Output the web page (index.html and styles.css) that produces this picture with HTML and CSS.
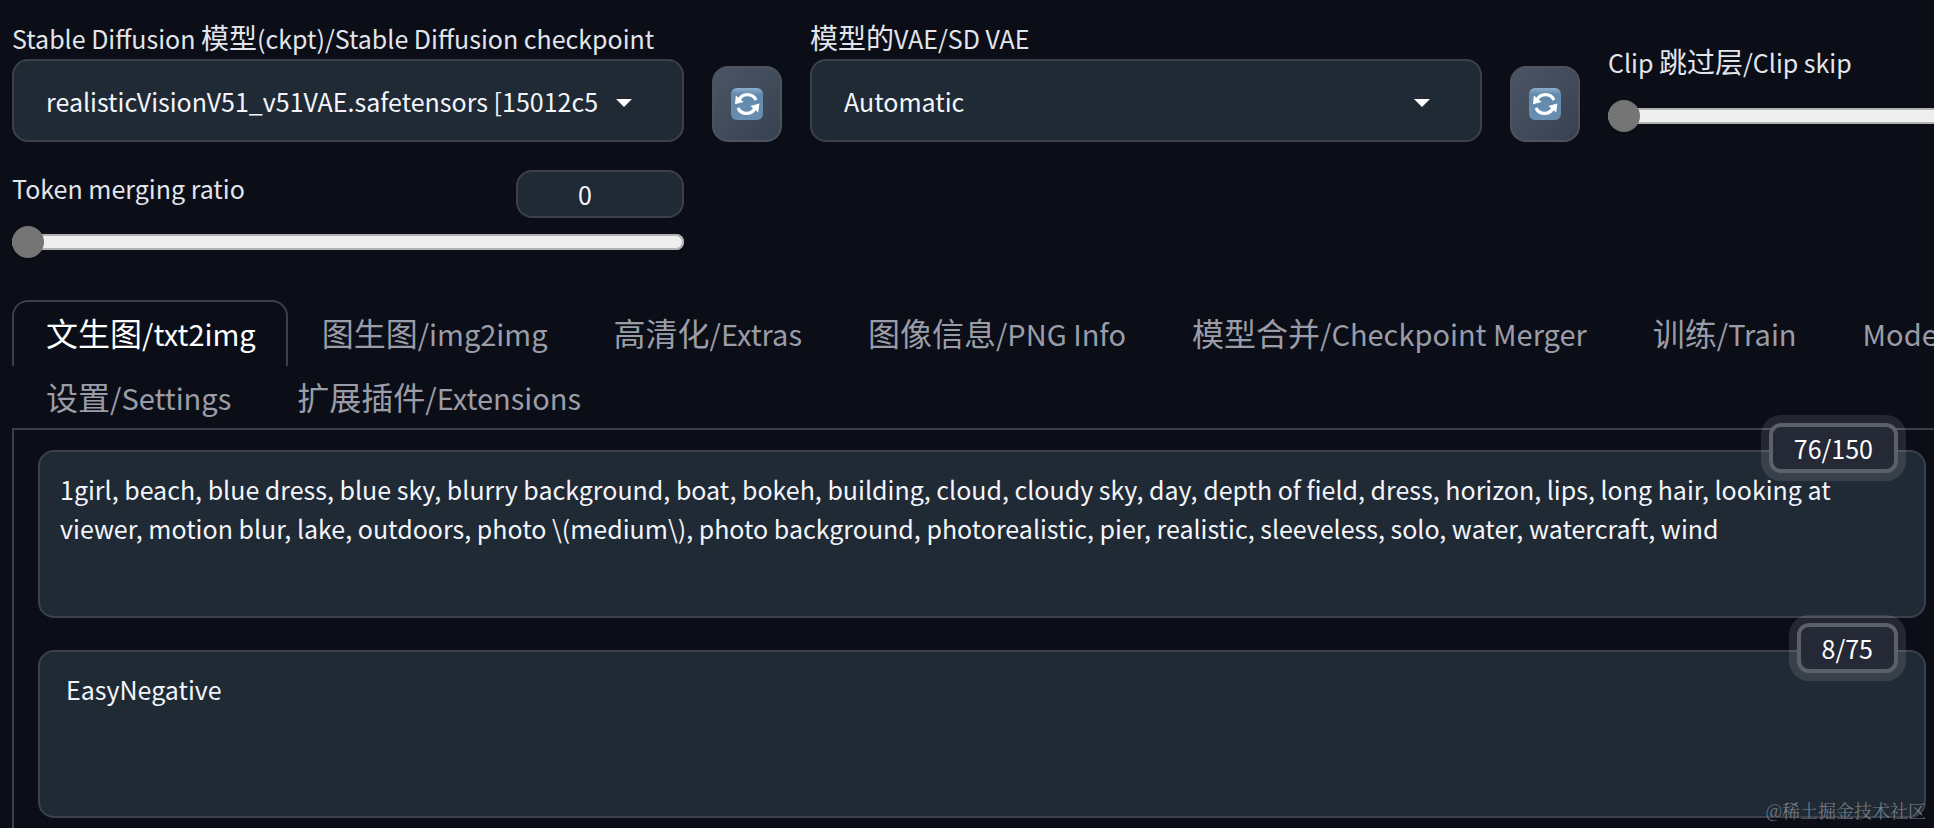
FILE: index.html
```html
<!DOCTYPE html>
<html lang="zh-CN">
  <head>
    <meta charset="UTF-8" />
    <meta name="viewport" content="width=device-width, initial-scale=1.0" />
    <title>Stable Diffusion</title>
    <link rel="stylesheet" href="styles.css">
  </head>
  <body>
    <svg class="sprite" aria-hidden="true">
      <defs>
        <linearGradient id="refreshFill" x1="0" y1="0" x2="0" y2="1">
          <stop offset="0" stop-color="#8fb0cc" />
          <stop offset="0.2" stop-color="#6389ad" />
          <stop offset="1" stop-color="#688fb0" />
        </linearGradient>
      </defs>
      <symbol id="refresh" viewBox="0 0 32 32">
        <rect width="32" height="32" rx="6" fill="url(#refreshFill)" />
        <path d="M8 12A9.4 9.4 0 0 1 25 12" fill="none" stroke="#fff" stroke-width="3.2" />
        <path d="M24 20A9.4 9.4 0 0 1 7 20" fill="none" stroke="#fff" stroke-width="3.2" />
        <path d="M4.8 7.5L4 16.2L12.6 14Z" fill="#fff" />
        <path d="M27.2 24.5L28.4 15.4L19.4 18Z" fill="#fff" />
      </symbol>
    </svg>

    <section class="quicksettings">
      <div class="field">
        <label for="checkpoint">Stable Diffusion <span class="zh">模型</span>(ckpt)/Stable Diffusion checkpoint</label>
        <div class="dropdown">
          <select id="checkpoint">
            <option>realisticVisionV51_v51VAE.safetensors [15012c5</option>
          </select>
        </div>
      </div>
      <button class="refresh" type="button" aria-label="Refresh checkpoints">
        <svg><use href="#refresh" /></svg>
      </button>

      <div class="field">
        <label for="vae"><span class="zh">模型的</span>VAE/SD VAE</label>
        <div class="dropdown">
          <select id="vae">
            <option>Automatic</option>
          </select>
        </div>
      </div>
      <button class="refresh" type="button" aria-label="Refresh VAE">
        <svg><use href="#refresh" /></svg>
      </button>

      <div class="field clip-skip">
        <div class="slider-head">
          <label for="clip">Clip <span class="zh">跳过层</span>/Clip skip</label>
        </div>
        <input type="range" id="clip" min="1" max="12" value="1" />
      </div>

      <div class="field">
        <div class="slider-head">
          <label for="ratio">Token merging ratio</label>
          <input type="number" id="ratioNumber" value="0" aria-label="Token merging ratio value" />
        </div>
        <input type="range" id="ratio" min="0" max="1" step="0.1" value="0" />
      </div>
    </section>

    <nav class="tabs">
      <button type="button" class="selected"><span class="zh">文生图</span>/txt2img</button>
      <button type="button"><span class="zh">图生图</span>/img2img</button>
      <button type="button"><span class="zh">高清化</span>/Extras</button>
      <button type="button"><span class="zh">图像信息</span>/PNG Info</button>
      <button type="button"><span class="zh">模型合并</span>/Checkpoint Merger</button>
      <button type="button"><span class="zh">训练</span>/Train</button>
      <button type="button">Model</button>
      <button type="button"><span class="zh">设置</span>/Settings</button>
      <button type="button"><span class="zh">扩展插件</span>/Extensions</button>
    </nav>

    <main class="panel">
      <div class="prompt">
        <textarea id="prompt" aria-label="Prompt" spellcheck="false">1girl, beach, blue dress, blue sky, blurry background, boat, bokeh, building, cloud, cloudy sky, day, depth of field, dress, horizon, lips, long hair, looking at viewer, motion blur, lake, outdoors, photo \(medium\), photo background, photorealistic, pier, realistic, sleeveless, solo, water, watercraft, wind</textarea>
        <span class="counter">76/150</span>
      </div>
      <div class="prompt negative">
        <textarea id="negativePrompt" aria-label="Negative prompt" spellcheck="false">EasyNegative</textarea>
        <span class="counter">8/75</span>
      </div>
    </main>

    <div class="watermark">@稀土掘金技术社区</div>

    <script>
      const ratio = document.getElementById("ratio");
      const ratioNumber = document.getElementById("ratioNumber");

      ratio.addEventListener("input", () => {
        ratioNumber.value = ratio.value;
      });
      ratioNumber.addEventListener("input", () => {
        ratio.value = ratioNumber.value;
      });

      const tabs = document.querySelectorAll(".tabs button");
      tabs.forEach((tab) => {
        tab.addEventListener("click", () => {
          tabs.forEach((t) => t.classList.remove("selected"));
          tab.classList.add("selected");
        });
      });
    </script>
  </body>
</html>
```
FILE: styles.css
```css
* {
  box-sizing: border-box;
}

body {
  margin: 0;
  padding: 20px 0 0 12px;
  position: relative;
  overflow-x: hidden;
  background-color: #0b0d17;
  color: #e2e5ec;
  font-family: "Noto Sans CJK SC", sans-serif;
  font-size: 25px;
  line-height: 36px;
}

button,
input,
select,
textarea {
  font: inherit;
  color: inherit;
  margin: 0;
}

.sprite {
  position: absolute;
  width: 0;
  height: 0;
}

.zh {
  font-size: 28px;
  line-height: 1;
}

/* quick settings */
.quicksettings {
  display: grid;
  grid-template-columns: 2fr 70px 2fr 70px 1fr;
  gap: 28px;
  margin-right: -10px;
}

.field {
  min-width: 0;
}

.field label {
  display: block;
  white-space: nowrap;
}

.dropdown {
  position: relative;
  margin-top: 3px;
}

.dropdown::after {
  content: "";
  position: absolute;
  right: 52px;
  top: 40px;
  border: 8px solid transparent;
  border-top-color: #fff;
  border-bottom: none;
  pointer-events: none;
}

select {
  display: block;
  width: 100%;
  height: 83px;
  padding: 0 84px 0 32px;
  appearance: none;
  background-color: #202a35;
  border: 2px solid #3b414c;
  border-radius: 16px;
  color: #f3f5fb;
}

.refresh {
  align-self: end;
  display: flex;
  align-items: center;
  justify-content: center;
  height: 76px;
  padding: 0;
  border: 2px solid #4b535e;
  border-radius: 16px;
  background: linear-gradient(to bottom right, #4b5563, #374151);
  cursor: pointer;
}

.refresh svg {
  width: 32px;
  height: 32px;
}

.clip-skip {
  padding-top: 24px;
}

.slider-head {
  display: flex;
  justify-content: space-between;
  height: 48px;
  margin-bottom: 8px;
}

input[type="number"] {
  width: 168px;
  height: 48px;
  padding: 0 30px 0 0;
  appearance: textfield;
  text-align: center;
  background-color: #202a35;
  border: 2px solid #3b414c;
  border-radius: 16px;
  color: #f3f5fb;
}

input[type="number"]::-webkit-inner-spin-button {
  display: none;
}

input[type="range"] {
  display: block;
  width: 100%;
  height: 32px;
  appearance: none;
  background: none;
}

input[type="range"]::-webkit-slider-runnable-track {
  height: 16px;
  background-color: #efefef;
  border-radius: 8px;
  box-shadow: inset 0 0 0 2px #b2b2b2;
}

input[type="range"]::-webkit-slider-thumb {
  appearance: none;
  width: 32px;
  height: 32px;
  margin-top: -8px;
  background-color: #757575;
  border-radius: 50%;
}

/* tabs */
.tabs {
  display: flex;
  flex-wrap: wrap;
  margin-top: 42px;
  margin-right: -100px;
}

.tabs button {
  height: 66px;
  margin-bottom: -2px;
  padding: 0 30px 2px 32px;
  background: none;
  border: 2px solid transparent;
  border-bottom: none;
  border-radius: 16px 16px 0 0;
  color: #9a9da8;
  font-size: 29px;
  white-space: nowrap;
  cursor: pointer;
}

.tabs .zh {
  font-size: 32px;
}

.tabs .selected {
  border-color: #3b414c;
  color: #fff;
}

/* prompts */
.panel {
  display: flex;
  flex-direction: column;
  gap: 32px;
  padding: 20px 8px 10px 24px;
  border-top: 2px solid #3b414c;
  border-left: 2px solid #3b414c;
}

.prompt {
  position: relative;
}

.prompt textarea {
  display: block;
  width: 100%;
  height: 168px;
  padding: 18px 20px;
  resize: none;
  background-color: #202a35;
  border: 2px solid #3b414c;
  border-radius: 16px;
  color: #f3f5fb;
  line-height: 39px;
}

.negative textarea {
  padding-left: 26px;
}

.counter {
  position: absolute;
  top: -27px;
  right: 28px;
  height: 50px;
  padding: 0 21px;
  border: 4px solid #5b606b;
  border-radius: 12px;
  background-color: #242935;
  box-shadow: 0 0 0 8px rgba(255, 255, 255, 0.11);
  color: #fff;
  line-height: 42px;
}

.watermark {
  position: absolute;
  right: 8px;
  bottom: 6px;
  color: #7d828b;
  font-family: "Noto Serif CJK SC", "Noto Sans CJK SC", serif;
  font-size: 18px;
  font-weight: 300;
  line-height: 24px;
}
```
